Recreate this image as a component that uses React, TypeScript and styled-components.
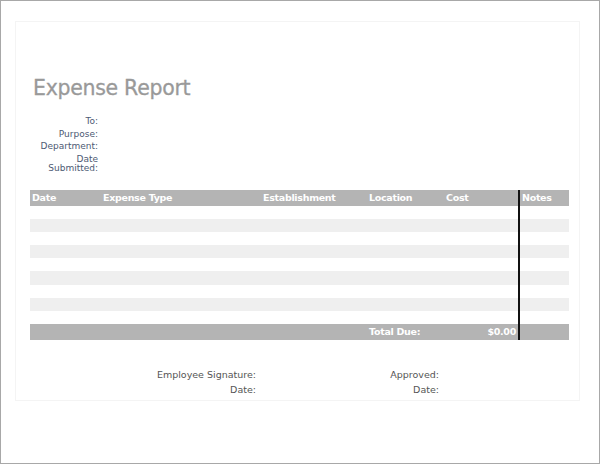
import React from "react";
import styled, { createGlobalStyle } from "styled-components";

const Global = createGlobalStyle`
  html, body { margin: 0; padding: 0; background: #fff; }
  body { font-family: "DejaVu Sans", Verdana, sans-serif; }
`;

const Frame = styled.div`
  width: 600px; height: 464px; box-sizing: border-box;
  border: 1px solid #a8a8a8; padding: 20px 19px 62px 14px; background: #fff;
`;
const Sheet = styled.div`
  height: 100%; box-sizing: border-box; border: 1px solid #f4f4f4;
  padding: 53px 10px 0 14px;
`;
const Title = styled.h1`
  margin: 0 0 16px 3px; font-size: 20.5px; font-weight: normal; color: #999;
  letter-spacing: -0.3px; line-height: 26px;
  -webkit-text-stroke: 0.3px #999;
`;
const Fields = styled.div`
  width: 68px; display: flex; flex-direction: column; gap: 3px; margin-bottom: 16px;
`;
const Label = styled.div`
  text-align: right; font-size: 9px; line-height: 9.5px; color: #4d5a73;
  white-space: nowrap;
`;
const Table = styled.div`
  width: 539px; display: grid;
  grid-template-columns: 71px 160px 106px 77px 74px 51px;
`;
const Cell = styled.div<{ $bg: string; $notes?: boolean; $right?: boolean; $h: number }>`
  height: ${p => p.$h}px; background: ${p => p.$bg}; box-sizing: border-box;
  border-left: ${p => (p.$notes ? "2px solid #111" : "none")};
  color: #fff; font-weight: bold; font-size: 9.5px; line-height: ${p => p.$h}px;
  padding: 0 2px; white-space: nowrap; letter-spacing: -0.3px;
  text-align: ${p => (p.$right ? "right" : "left")};
`;
const Footer = styled.div`
  display: grid; grid-template-columns: 226px 183px; margin-top: 29px;
  row-gap: 3px;
`;
const FLabel = styled.div`
  text-align: right; font-size: 9.5px; line-height: 12px; color: #555;
`;

const headers = ["Date", "Expense Type", "Establishment", "Location", "Cost", "Notes"];
const heights = [13, 13, 13, 13, 13, 14, 13, 13, 13];

export default function App() {
  return (
    <>
      <Global />
      <Frame>
        <Sheet>
          <Title>Expense Report</Title>
          <Fields>
            <Label>To:</Label>
            <Label>Purpose:</Label>
            <Label>Department:</Label>
            <Label>Date<br />Submitted:</Label>
          </Fields>
          <Table>
            {headers.map((h, i) => (
              <Cell key={h} $bg="#b4b4b4" $h={16} $notes={i === 5}>{h}</Cell>
            ))}
            {heights.map((h, r) =>
              headers.map((_, i) => (
                <Cell key={r + "-" + i} $h={h} $bg={r % 2 ? "#efefef" : "#fff"} $notes={i === 5} />
              ))
            )}
            <Cell $bg="#b4b4b4" $h={16} />
            <Cell $bg="#b4b4b4" $h={16} />
            <Cell $bg="#b4b4b4" $h={16} />
            <Cell $bg="#b4b4b4" $h={16}>Total Due:</Cell>
            <Cell $bg="#b4b4b4" $h={16} $right>$0.00</Cell>
            <Cell $bg="#b4b4b4" $h={16} $notes />
          </Table>
          <Footer>
            <FLabel>Employee Signature:</FLabel>
            <FLabel>Approved:</FLabel>
            <FLabel>Date:</FLabel>
            <FLabel>Date:</FLabel>
          </Footer>
        </Sheet>
      </Frame>
    </>
  );
}
